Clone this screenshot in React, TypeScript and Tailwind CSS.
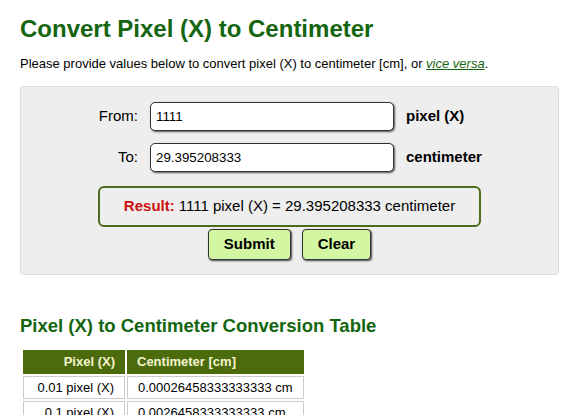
export default function App() {
  const rows = [
    { px: "0.01 pixel (X)", cm: "0.00026458333333333 cm" },
    { px: "0.1 pixel (X)", cm: "0.0026458333333333 cm" },
    { px: "1 pixel (X)", cm: "0.026458333333333 cm" },
  ]

  return (
    <div className="min-h-screen bg-white font-['Liberation_Sans',Arial,sans-serif] text-[#000] px-5 pt-[13px]">
      {/* Title */}
      <h1 className="text-[24px] leading-[32px] font-bold text-[#14650f]">Convert Pixel (X) to Centimeter</h1>
      <p className="mt-[10px] text-[13px] leading-[18px]">
        Please provide values below to convert pixel (X) to centimeter [cm], or{" "}
        <a href="#" className="italic underline text-[#14650f]">vice versa</a>.
      </p>

      {/* Converter box */}
      <div className="mt-[13px] w-[539px] h-[189px] bg-[#eeeeee] border border-[#dddddd] rounded-[3px] pt-[15px]">
        <div className="flex items-center h-[29px]">
          <div className="w-[117px] text-right text-[15px]">From:</div>
          <input
            defaultValue="1111"
            className="ml-[12px] w-[244px] h-[29px] bg-white border border-[#333] rounded-[5px] shadow-[1px_1px_2px_#555] px-[5px] text-[13.33px] outline-none"
          />
          <div className="ml-[12px] text-[15px] font-bold">pixel (X)</div>
        </div>
        <div className="flex items-center h-[29px] mt-[12px]">
          <div className="w-[117px] text-right text-[15px]">To:</div>
          <input
            defaultValue="29.395208333"
            className="ml-[12px] w-[244px] h-[29px] bg-white border border-[#333] rounded-[5px] shadow-[1px_1px_2px_#555] px-[5px] text-[13.33px] outline-none"
          />
          <div className="ml-[12px] text-[15px] font-bold">centimeter</div>
        </div>

        {/* Result */}
        <div className="mx-auto mt-[14px] w-[383px] h-[41px] border-2 border-[#4d6b1c] rounded-[6px] flex items-center justify-center text-[15px]">
          <span className="font-bold text-[#cc1111] mr-[4px]">Result:</span>
          <span>1111 pixel (X) = 29.395208333 centimeter</span>
        </div>

        {/* Buttons */}
        <div className="flex justify-center gap-[11px] mt-[2px]">
          <button className="h-[31px] px-[15px] bg-[#d3f6a2] border border-[#333] rounded-[4px] shadow-[1px_1px_2px_#444] text-[15px] font-bold">
            Submit
          </button>
          <button className="h-[31px] px-[15px] bg-[#d3f6a2] border border-[#333] rounded-[4px] shadow-[1px_1px_2px_#444] text-[15px] font-bold">
            Clear
          </button>
        </div>
      </div>

      {/* Table */}
      <h2 className="mt-[39px] text-[18.5px] leading-[24px] font-bold text-[#14650f]">
        Pixel (X) to Centimeter Conversion Table
      </h2>
      <table className="mt-[10px] ml-[1px] border-separate border-spacing-[2px] text-[13px]">
        <thead>
          <tr>
            <th className="w-[102px] h-[24px] bg-[#4b6b0d] text-[#f4f4cc] text-right pr-[10px] font-bold">Pixel (X)</th>
            <th className="w-[177px] h-[24px] bg-[#4b6b0d] text-[#f4f4cc] text-left pl-[10px] font-bold">Centimeter [cm]</th>
          </tr>
        </thead>
        <tbody>
          {rows.map((r) => (
            <tr key={r.px}>
              <td className="h-[23px] bg-white border border-[#cccccc] text-right pr-[10px]">{r.px}</td>
              <td className="h-[23px] bg-white border border-[#cccccc] text-left pl-[10px]">{r.cm}</td>
            </tr>
          ))}
        </tbody>
      </table>
    </div>
  )
}
